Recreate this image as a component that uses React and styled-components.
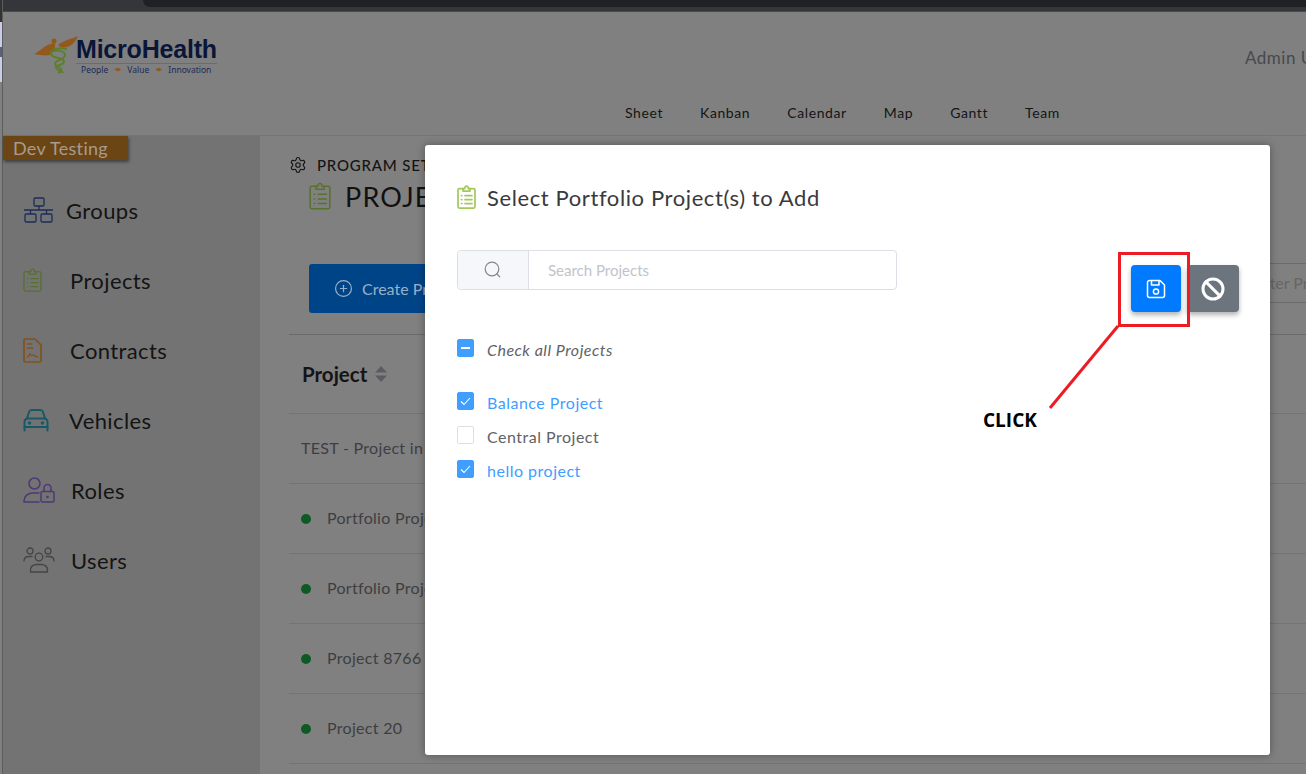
import React from "react";
import styled, { createGlobalStyle } from "styled-components";
import { Settings, CirclePlus, Ban } from "lucide-react";

const FONT = `"Lato", "Noto Sans", sans-serif`;

const GlobalStyle = createGlobalStyle`
    html, body {
        margin: 0;
        padding: 0;
        background: #808080;
        font-family: ${FONT};
    }
    * {
        box-sizing: border-box;
    }
`;

const Frame = styled.div`
    position: relative;
    display: flex;
    width: 1306px;
    height: 774px;
    overflow: hidden;
    background: #808080;
`;

const LeftEdge = styled.div`
    display: flex;
    flex-direction: column;
    flex: 0 0 3px;
    border-right: 1px solid #5c5c5c;
`;

const EdgePiece = styled.div`
    flex: ${props => (props.$h ? `0 0 ${props.$h}px` : "1")};
    background: ${props => props.$color};
`;

const Main = styled.div`
    display: flex;
    flex-direction: column;
    flex: 1;
    min-width: 0;
`;

const Chrome = styled.div`
    flex: 0 0 12px;
    background: #35363a;
    padding-left: 140px;
    border-bottom: 1px solid #4b4b4d;
`;

const ChromeTab = styled.div`
    height: 7px;
    background: #202124;
    border-bottom-left-radius: 8px;
`;

const Header = styled.header`
    display: flex;
    flex-direction: column;
    flex: 0 0 124px;
    border-bottom: 1px solid #747474;
`;

const TopRow = styled.div`
    display: flex;
    justify-content: space-between;
    height: 80px;
    padding: 23px 0 0 31px;
`;

const Logo = styled.div`
    display: flex;
    align-items: flex-start;
`;

const LogoText = styled.div`
    display: flex;
    flex-direction: column;
    margin: 2px 0 0 -4px;
`;

const LogoName = styled.div`
    font-family: "Liberation Sans", sans-serif;
    font-weight: 700;
    font-size: 25px;
    line-height: 25px;
    letter-spacing: -0.2px;
    color: #0a1638;
    border-bottom: 1px solid #5d7f2c;
    padding-bottom: 1px;
`;

const LogoTag = styled.div`
    display: flex;
    align-items: center;
    gap: 4px;
    margin: 0 0 0 5px;
    font-family: "Noto Sans", sans-serif;
    font-size: 8.5px;
    line-height: 11px;
    color: #1c2a55;
`;

const Diamond = styled.span`
    width: 7px;
    height: 4px;
    background: #93591c;
    clip-path: polygon(50% 0, 100% 50%, 50% 100%, 0 50%);
    margin: 0 2px;
`;

const AdminName = styled.div`
    flex: 0 0 61px;
    min-width: 0;
    margin-top: 11px;
    font-size: 17px;
    letter-spacing: 0.5px;
    line-height: 24px;
    white-space: nowrap;
    color: #48484e;
`;

const TopNav = styled.nav`
    display: flex;
    gap: 37px;
    padding: 11px 0 0 622px;
`;

const TopLink = styled.span`
    font-size: 14px;
    line-height: 20px;
    letter-spacing: 0.6px;
    color: #141414;
`;

const Body = styled.div`
    display: flex;
    flex: 1;
    min-height: 0;
`;

const Sidebar = styled.aside`
    flex: 0 0 257px;
    background: #737373;
`;

const Badge = styled.div`
    width: 125px;
    height: 24px;
    padding-left: 10px;
    background: #6c4515;
    color: #a69c8f;
    font-size: 18px;
    line-height: 25px;
    letter-spacing: 0.3px;
    box-shadow: 1px 2px 3px rgba(0, 0, 0, 0.45);
`;

const SideList = styled.div`
    display: flex;
    flex-direction: column;
    margin-top: 15px;
    padding-left: 20px;
`;

const SideItem = styled.div`
    display: flex;
    align-items: center;
    height: 70px;
    font-size: 22px;
    letter-spacing: 0.4px;
    color: #141414;
`;

const SideIcon = styled.span`
    display: flex;
    flex: 0 0 ${props => props.$w}px;
`;

const Content = styled.main`
    flex: 1;
    min-width: 0;
    padding: 19px 0 0 29px;
    overflow: hidden;
`;

const Crumb = styled.div`
    display: flex;
    align-items: center;
    gap: 10px;
    height: 20px;
    font-size: 15px;
    font-weight: 500;
    letter-spacing: 0.8px;
    color: #141414;
    white-space: nowrap;
`;

const PageTitle = styled.div`
    display: flex;
    align-items: center;
    gap: 14px;
    height: 34px;
    margin: 4px 0 0 20px;
    font-size: 27px;
    letter-spacing: 1.2px;
    color: #111;
    white-space: nowrap;
`;

const Toolbar = styled.div`
    display: flex;
    justify-content: space-between;
    align-items: flex-start;
    margin-top: 51px;
    padding-left: 20px;
`;

const CreateButton = styled.div`
    display: flex;
    align-items: center;
    gap: 9px;
    width: 170px;
    height: 49px;
    padding-left: 25px;
    border-radius: 3px;
    background: #004488;
    color: #97b0c9;
    font-size: 16px;
    white-space: nowrap;
`;

const FilterInput = styled.div`
    width: 300px;
    height: 40px;
    margin: -1px -100px 0 0;
    padding-left: 146px;
    border: 1px solid #6b6b6b;
    font-size: 16px;
    line-height: 38px;
    color: #666;
    white-space: nowrap;
`;

const Table = styled.div`
    margin-top: 21px;
    border-top: 1px solid #6a6a6a;
`;

const TableHead = styled.div`
    display: flex;
    align-items: center;
    gap: 8px;
    height: 79px;
    padding-left: 13px;
    border-bottom: 1px solid #747474;
    font-size: 20.5px;
    font-weight: 700;
    color: #141414;
`;

const Row = styled.div`
    display: flex;
    align-items: center;
    gap: 16px;
    height: 70px;
    padding: 0 0 2px 12px;
    border-bottom: 1px solid #747474;
    font-size: 16px;
    letter-spacing: 0.3px;
    color: #3e3e42;
    white-space: nowrap;
`;

const Dot = styled.span`
    flex: 0 0 10px;
    height: 10px;
    margin: 2px 0 0 0;
    border-radius: 50%;
    background: #0f5a24;
`;

const Modal = styled.section`
    position: absolute;
    top: 145px;
    left: 425px;
    width: 845px;
    height: 610px;
    padding: 37px 31px 0 32px;
    background: #fff;
    border-radius: 3px;
    box-shadow: 0 0 8px rgba(0, 0, 0, 0.35);
`;

const ModalTitle = styled.h2`
    display: flex;
    align-items: center;
    gap: 11px;
    height: 30px;
    margin: 0;
    font-size: 22px;
    font-weight: 400;
    letter-spacing: 0.6px;
    color: #3a3a3c;
`;

const ActionRow = styled.div`
    display: flex;
    justify-content: space-between;
    margin-top: 38px;
`;

const SearchBox = styled.div`
    display: flex;
    width: 440px;
    height: 40px;
    border: 1px solid #dcdfe6;
    border-radius: 4px;
`;

const SearchAddon = styled.div`
    display: flex;
    align-items: center;
    justify-content: center;
    flex: 0 0 71px;
    background: #f5f7fa;
    border-right: 1px solid #dcdfe6;
    border-radius: 4px 0 0 4px;
`;

const SearchInput = styled.input`
    flex: 1;
    min-width: 0;
    padding: 0 19px;
    border: 0;
    outline: 0;
    background: transparent;
    font-family: ${FONT};
    font-size: 15px;
    &::placeholder {
        color: #c0c4cc;
        opacity: 1;
    }
`;

const Actions = styled.div`
    display: flex;
    gap: 6px;
    margin-top: 15px;
`;

const ActionButton = styled.button`
    display: flex;
    align-items: center;
    justify-content: center;
    width: ${props => props.$w}px;
    height: 47px;
    padding: 0;
    border: 0;
    border-radius: 4px;
    color: #fff;
    background: ${props => props.$bg};
    box-shadow: 0 3px 5px rgba(0, 0, 0, 0.3);
`;

const CheckList = styled.div`
    display: flex;
    flex-direction: column;
    margin-top: 20px;
`;

const CheckRow = styled.label`
    display: flex;
    align-items: center;
    gap: 13px;
    height: 34px;
    margin-bottom: ${props => (props.$all ? "19px" : "0")};
    font-size: 16px;
    letter-spacing: 0.5px;
    font-style: ${props => (props.$all ? "italic" : "normal")};
    color: ${props => (props.$on ? "#409eff" : "#606266")};
`;

const CheckBox = styled.span`
    display: flex;
    align-items: center;
    justify-content: center;
    flex: 0 0 17px;
    height: 18px;
    margin-top: -2px;
    border-radius: 2px;
    border: 1px solid ${props => (props.$on ? "#409eff" : "#dcdfe6")};
    background: ${props => (props.$on ? "#409eff" : "#fff")};
`;

const DashMark = styled.span`
    width: 9px;
    height: 2px;
    background: #fff;
`;

const RedBox = styled.div`
    position: absolute;
    top: 252px;
    left: 1118px;
    width: 72px;
    height: 75px;
    border: 3px solid #ed1c24;
`;

const RedLine = styled.svg`
    position: absolute;
    top: 325px;
    left: 1048px;
`;

const ClickLabel = styled.div`
    position: absolute;
    top: 407px;
    left: 983px;
    font-family: "Open Sans", sans-serif;
    font-weight: 700;
    font-size: 19px;
    line-height: 26px;
    color: #000;
`;

const Clipboard = ({ color, width = 19, sw = 1.6 }) => (
    <svg width={width} height={width * 1.32} viewBox="0 0 19 25" fill="none" stroke={color} strokeWidth={sw} strokeLinecap="round" strokeLinejoin="round">
        <path d="M6 4.5H2.5a1.5 1.5 0 0 0-1.5 1.5v16.5a1.5 1.5 0 0 0 1.5 1.5h14a1.5 1.5 0 0 0 1.5-1.5V6a1.5 1.5 0 0 0-1.5-1.5H13" />
        <path d="M6 7V4.5h1.8a1.8 1.8 0 1 1 3.4 0H13V7z" />
        <path d="M8 11.5h7M8 15.5h7M8 19.5h7M4.5 11.5h.4M4.5 15.5h.4M4.5 19.5h.4" />
    </svg>
);

const GroupsIcon = () => (
    <svg width="31" height="26" viewBox="0 0 31 26" fill="none" stroke="#1c2d58" strokeWidth="1.3" strokeLinejoin="round">
        <rect x="11" y="1" width="10" height="8" rx="1.2" />
        <rect x="2" y="17" width="11" height="8" rx="1.2" />
        <rect x="18" y="17" width="11" height="8" rx="1.2" />
        <path d="M16 9v4M1 13h29M7.5 13v4M23.5 13v4" />
    </svg>
);

const ContractIcon = () => (
    <svg width="19" height="25" viewBox="0 0 19 25" fill="none" stroke="#84511a" strokeWidth="1.7" strokeLinejoin="round" strokeLinecap="round">
        <path d="M2.5 1H12l6 6v15.500a1.500 1.500 0 0 1-1.500 1.500h-14A1.500 1.500 0 0 1 1 22.500v-20A1.500 1.500 0 0 1 2.500 1z" />
        <path d="M4.500 6h4M4.500 10h5" />
        <path d="M4 19c1.500 0 2-1 3-3.500 1 2.500 1.500 2.500 2.500 1.500s2 1.500 5.500 2" strokeWidth="1.200" />
    </svg>
);

const CarIcon = () => (
    <svg width="26" height="23" viewBox="0 0 26 23" fill="none" stroke="#175a66" strokeWidth="2" strokeLinecap="round" strokeLinejoin="round">
        <path d="M1.500 21.500V13c0-1.500 1-3 2.500-3.500L6 3c.4-1.200 1.300-2 2.500-2h9c1.200 0 2.100.8 2.500 2l2 6.500c1.500.5 2.500 2 2.500 3.500v8.500" />
        <path d="M4 9.500h18M1.500 18h23" />
        <circle cx="6.500" cy="14" r="0.800" />
        <circle cx="19.500" cy="14" r="0.800" />
    </svg>
);

const RolesIcon = () => (
    <svg width="32" height="26" viewBox="0 0 32 26" fill="none" stroke="#4e3878" strokeWidth="1.500" strokeLinecap="round" strokeLinejoin="round">
        <circle cx="11.500" cy="6.500" r="5.500" />
        <path d="M1 25v-1c0-5 4-8 9-8h6M1 25h15" />
        <rect x="18" y="14.500" width="13" height="10.500" rx="1.500" />
        <path d="M21 14.500V11a3.500 3.500 0 0 1 7 0v3.500" />
        <circle cx="24.500" cy="20" r="0.600" />
    </svg>
);

const UsersIcon = () => (
    <svg width="32" height="26" viewBox="0 0 32 26" fill="none" stroke="#454545" strokeWidth="1.300" strokeLinecap="round" strokeLinejoin="round">
        <circle cx="7" cy="4" r="3" />
        <circle cx="25" cy="4" r="3" />
        <circle cx="16" cy="10" r="3.800" />
        <path d="M1 14c0-3 2-4.500 5-4.500h3M31 14c0-3-2-4.500-5-4.500h-3" />
        <path d="M7.500 25v-2.500c0-3 3-5 6-5h5c3 0 6 2 6 5V25z" />
    </svg>
);

const SearchIcon = () => (
    <svg width="18" height="18" viewBox="0 0 18 18" fill="none" stroke="#7f8790" strokeWidth="1.200" strokeLinecap="round">
        <circle cx="8" cy="8" r="6.800" />
        <path d="M13 13l2.800 2.800" />
    </svg>
);

const SaveIcon = () => (
    <svg width="20" height="20" viewBox="0 0 20 20" fill="none" stroke="#fff" strokeWidth="1.500" strokeLinejoin="round">
        <path d="M3.500 1.500H14l4.500 4.500v10.500a2 2 0 0 1-2 2h-13a2 2 0 0 1-2-2v-13a2 2 0 0 1 2-2z" />
        <path d="M5.500 1.500v4.500h7.500V1.500" />
        <circle cx="10" cy="12.500" r="2.600" />
    </svg>
);

const CheckMark = () => (
    <svg width="11" height="9" viewBox="0 0 11 9" fill="none" stroke="#fff" strokeWidth="1.100">
        <path d="M1 4.500l3 3L10 1" />
    </svg>
);

const SortIcon = () => (
    <svg width="12" height="16" viewBox="0 0 12 16" fill="#5c5c60">
        <path d="M6 0l6 6.500H0zM6 16l6-6.500H0z" />
    </svg>
);

const LogoMark = () => (
    <svg width="46" height="40" viewBox="0 0 46 40" fill="none">
        <path d="M0 19C6 17 10 9 21 8C22 12 20 17 16 20C11 21 5 20 0 19z" fill="#93591c" />
        <path d="M24 10C30 5 38 4 44 1C42 6 38 11 33 12C29 13 26 12 24 10z" fill="#93591c" />
        <circle cx="20" cy="6" r="2.500" fill="#93591c" />
        <path d="M33 14C26 12 16 14 17 19C18 24 31 22 30 27C29 31 21 29 22 33C23 36 28 35 29 38" stroke="#5d7f2c" strokeWidth="2" />
        <path d="M16 18C19 14 31 15 31 20C31 25 20 25 21 29C22 33 29 32 27 36C26 37 24 38 24 38" stroke="#5d7f2c" strokeWidth="2" />
    </svg>
);

const sideItems = [
    { label: "Groups", icon: <GroupsIcon />, w: 43 },
    { label: "Projects", icon: <Clipboard color="#587030" sw={1.300} />, w: 47 },
    { label: "Contracts", icon: <ContractIcon />, w: 47 },
    { label: "Vehicles", icon: <CarIcon />, w: 46 },
    { label: "Roles", icon: <RolesIcon />, w: 48 },
    { label: "Users", icon: <UsersIcon />, w: 48 },
];

const topLinks = ["Sheet", "Kanban", "Calendar", "Map", "Gantt", "Team"];

const rows = ["Portfolio Project 1", "Portfolio Project 2", "Project 8766", "Project 20"];

const projects = [
    { name: "Balance Project", on: true },
    { name: "Central Project", on: false },
    { name: "hello project", on: true },
];

export default function App() {
    return (
        <Frame>
            <GlobalStyle />
            <LeftEdge>
                <EdgePiece $h={22} $color="#333" />
                <EdgePiece $h={25} $color="#c9cde8" />
                <EdgePiece $h={10} $color="#5a5f7a" />
                <EdgePiece $h={25} $color="#c9cde8" />
                <EdgePiece $color="#808080" />
            </LeftEdge>
            <Main>
                <Chrome>
                    <ChromeTab />
                </Chrome>
                <Header>
                    <TopRow>
                        <Logo>
                            <LogoMark />
                            <LogoText>
                                <LogoName>MicroHealth</LogoName>
                                <LogoTag>
                                    People <Diamond /> Value <Diamond /> Innovation
                                </LogoTag>
                            </LogoText>
                        </Logo>
                        <AdminName>Admin User</AdminName>
                    </TopRow>
                    <TopNav>
                        {topLinks.map(link => (
                            <TopLink key={link}>{link}</TopLink>
                        ))}
                    </TopNav>
                </Header>
                <Body>
                    <Sidebar>
                        <Badge>Dev Testing</Badge>
                        <SideList>
                            {sideItems.map(item => (
                                <SideItem key={item.label}>
                                    <SideIcon $w={item.w}>{item.icon}</SideIcon>
                                    {item.label}
                                </SideItem>
                            ))}
                        </SideList>
                    </Sidebar>
                    <Content>
                        <Crumb>
                            <Settings size={18} strokeWidth={1.500} color="#141414" />
                            PROGRAM SETTINGS
                        </Crumb>
                        <PageTitle>
                            <Clipboard color="#587030" width={22} sw={1.300} />
                            PROJECTS
                        </PageTitle>
                        <Toolbar>
                            <CreateButton>
                                <CirclePlus size={19} strokeWidth={1.500} color="#97b0c9" />
                                Create Project
                            </CreateButton>
                            <FilterInput>Filter Projects</FilterInput>
                        </Toolbar>
                        <Table>
                            <TableHead>
                                Project <SortIcon />
                            </TableHead>
                            <Row>TEST - Project in Portfolio</Row>
                            {rows.map(name => (
                                <Row key={name}>
                                    <Dot />
                                    {name}
                                </Row>
                            ))}
                        </Table>
                    </Content>
                </Body>
            </Main>
            <Modal>
                <ModalTitle>
                    <Clipboard color="#a2c95a" sw={1.700} />
                    Select Portfolio Project(s) to Add
                </ModalTitle>
                <ActionRow>
                    <SearchBox>
                        <SearchAddon>
                            <SearchIcon />
                        </SearchAddon>
                        <SearchInput placeholder="Search Projects" />
                    </SearchBox>
                    <Actions>
                        <ActionButton $w={50} $bg="#007bff">
                            <SaveIcon />
                        </ActionButton>
                        <ActionButton $w={52} $bg="#6c757d">
                            <Ban size={24} strokeWidth={3} />
                        </ActionButton>
                    </Actions>
                </ActionRow>
                <CheckList>
                    <CheckRow $all>
                        <CheckBox $on>
                            <DashMark />
                        </CheckBox>
                        Check all Projects
                    </CheckRow>
                    {projects.map(project => (
                        <CheckRow key={project.name} $on={project.on}>
                            <CheckBox $on={project.on}>{project.on && <CheckMark />}</CheckBox>
                            {project.name}
                        </CheckRow>
                    ))}
                </CheckList>
            </Modal>
            <RedBox />
            <RedLine width="72" height="86" viewBox="0 0 72 86">
                <path d="M70 1L2 83" stroke="#ed1c24" strokeWidth="3" />
            </RedLine>
            <ClickLabel>CLICK</ClickLabel>
        </Frame>
    );
}
